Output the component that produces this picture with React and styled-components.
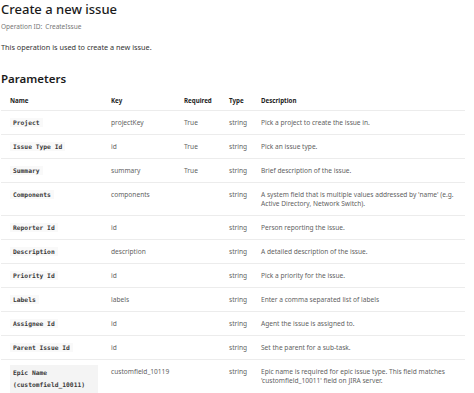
import React from 'react'
import styled, { createGlobalStyle } from 'styled-components'

const GlobalStyle = createGlobalStyle`
  html, body {
    margin: 0;
    padding: 0;
    background: #ffffff;
  }
  body {
    font-family: "Noto Sans", "Open Sans", sans-serif;
    color: #333333;
  }
`

const params = [
  { name: 'Project', key: 'projectKey', required: 'True', type: 'string', desc: 'Pick a project to create the issue in.' },
  { name: 'Issue Type Id', key: 'id', required: 'True', type: 'string', desc: 'Pick an issue type.' },
  { name: 'Summary', key: 'summary', required: 'True', type: 'string', desc: 'Brief description of the issue.' },
  { name: 'Components', key: 'components', required: '', type: 'string', desc: "A system field that is multiple values addressed by 'name' (e.g. Active Directory, Network Switch)." },
  { name: 'Reporter Id', key: 'id', required: '', type: 'string', desc: 'Person reporting the issue.' },
  { name: 'Description', key: 'description', required: '', type: 'string', desc: 'A detailed description of the issue.' },
  { name: 'Priority Id', key: 'id', required: '', type: 'string', desc: 'Pick a priority for the issue.' },
  { name: 'Labels', key: 'labels', required: '', type: 'string', desc: 'Enter a comma separated list of labels' },
  { name: 'Assignee Id', key: 'id', required: '', type: 'string', desc: 'Agent the issue is assigned to.' },
  { name: 'Parent Issue Id', key: 'id', required: '', type: 'string', desc: 'Set the parent for a sub-task.' },
  { name: 'Epic Name (customfield_10011)', key: 'customfield_10119', required: '', type: 'string', desc: "Epic name is required for epic issue type. This field matches 'customfield_10011' field on JIRA server." },
]

const Page = styled.div`
  padding: 0 1px;
  width: 464px;
`

const Title = styled.h1`
  margin: 0;
  padding-top: 1px;
  font-size: 13px;
  line-height: 16px;
  font-weight: 500;
  color: #1b1b1b;
`

const OperationId = styled.div`
  margin-top: 5px;
  font-size: 6.5px;
  line-height: 9px;
  color: #777777;

  span {
    margin-left: 3px;
  }
`

const Summary = styled.p`
  margin: 11px 0 0;
  font-size: 7.3px;
  line-height: 10px;
  color: #333333;
`

const SectionTitle = styled.h2`
  margin: 20px 0 0;
  font-size: 11.5px;
  line-height: 14px;
  font-weight: 600;
  color: #1b1b1b;
`

const Table = styled.table`
  margin-top: 5px;
  width: 464px;
  border-collapse: collapse;
  table-layout: fixed;
`

const HeadCell = styled.th`
  text-align: left;
  font-size: 6.2px;
  font-weight: 700;
  color: #222222;
  padding: 5px 4px 4px 9px;
  line-height: 10px;
  border-bottom: 1px solid #ececec;
`

const Cell = styled.td`
  vertical-align: top;
  font-size: 6.6px;
  line-height: 9px;
  color: #5f5f5f;
  padding: 7px 4px 7px 9px;
  border-bottom: 1px solid #ececec;
`

const Code = styled.code`
  display: inline-block;
  vertical-align: top;
  font-family: "DejaVu Sans Mono", "Liberation Mono", monospace;
  font-size: 6.3px;
  line-height: ${({ $wrap }) => ($wrap ? '12px' : '9px')};
  margin: ${({ $wrap }) => ($wrap ? '-2px 0 0' : '0')};
  padding: ${({ $wrap }) => ($wrap ? '2px 3px' : '0 3px')};
  background: ${({ $wrap }) => ($wrap ? '#f4f4f4' : '#f9f9f9')};
  color: #3a3a3a;
  font-weight: 700;
  max-width: 82px;
`

export default function App() {
  return (
    <>
      <GlobalStyle />
      <Page>
        <Title>Create a new issue</Title>
        <OperationId>
          Operation ID:<span>CreateIssue</span>
        </OperationId>
        <Summary>This operation is used to create a new issue.</Summary>
        <SectionTitle>Parameters</SectionTitle>
        <Table>
          <colgroup>
            <col style={{ width: '101px' }} />
            <col style={{ width: '73px' }} />
            <col style={{ width: '45px' }} />
            <col style={{ width: '32px' }} />
            <col />
          </colgroup>
          <thead>
            <tr>
              <HeadCell>Name</HeadCell>
              <HeadCell>Key</HeadCell>
              <HeadCell>Required</HeadCell>
              <HeadCell>Type</HeadCell>
              <HeadCell>Description</HeadCell>
            </tr>
          </thead>
          <tbody>
            {params.map((p) => (
              <tr key={p.name}>
                <Cell>
                  <Code $wrap={p.name.length > 20}>{p.name}</Code>
                </Cell>
                <Cell>{p.key}</Cell>
                <Cell>{p.required}</Cell>
                <Cell>{p.type}</Cell>
                <Cell>{p.desc}</Cell>
              </tr>
            ))}
          </tbody>
        </Table>
      </Page>
    </>
  )
}
